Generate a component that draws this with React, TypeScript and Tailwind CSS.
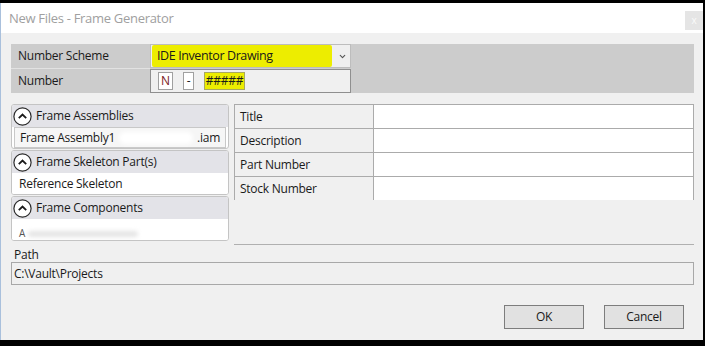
import { ChevronDown } from "lucide-react";

// Circled chevron used on the collapsible group headers
function CollapseIcon() {
  return (
    <svg width="19" height="19" viewBox="0 0 19 19" className="shrink-0">
      <circle cx="9.5" cy="9.5" r="8.6" fill="#fff" stroke="#2a2a2a" strokeWidth="1.2" />
      <path d="M5.8 11.2 L9.5 7.5 L13.2 11.2" fill="none" stroke="#1a1a1a" strokeWidth="1.8" />
    </svg>
  );
}

function Group({ title, children }: { title: string; children: React.ReactNode }) {
  return (
    <div className="flex flex-col border border-[#c4c4c4] rounded-[3px] overflow-hidden bg-white">
      <div className="h-[22px] bg-[#e3e3e8] flex items-center pl-px gap-[4px] text-[12px] tracking-[-0.25px] text-[#1a1a1a]">
        <CollapseIcon />
        <span>{title}</span>
      </div>
      {children}
    </div>
  );
}

const fields = ["Title", "Description", "Part Number", "Stock Number"];

export default function App() {
  return (
    <div className="w-[705px] h-[346px] bg-black pt-[3px] pb-[6px] pr-[2px] overflow-hidden font-['Open_Sans',sans-serif]">
      <div className="h-full flex flex-col bg-[#f0f0f0] border-l border-[#a9c0dc]">
        {/* Title bar */}
        <div className="h-[30px] bg-white flex items-start shrink-0">
          <span className="pl-[8px] mt-[6px] text-[13px] text-[#a0a0a0] tracking-[-0.3px]">
            New Files - Frame Generator
          </span>
          <div className="ml-auto mt-[8px] w-[18px] h-[19px] bg-[#e5e5e5] flex items-center justify-center text-[10px] text-[#fafafa]">
            x
          </div>
        </div>

        <div className="flex-1 flex flex-col pl-[10px] pr-[9px] pt-[11px] text-[12px] tracking-[-0.25px] text-[#1a1a1a]">
          {/* Number scheme block */}
          <div className="h-[49px] bg-[#cccccc] flex flex-col">
            <div className="h-[24px] flex">
              <div className="w-[139px] flex items-center pl-[7px]">Number Scheme</div>
              <div className="w-[201px] border border-[#bdbdbd] bg-[#efefef] flex items-center">
                <span className="ml-px h-[22px] w-[180px] bg-[#eded00] rounded-[2px] flex items-center pl-[5px] text-[12.5px] tracking-[-0.4px]">
                  IDE Inventor Drawing
                </span>
                <ChevronDown className="ml-auto mr-[3px] w-[9px] h-[9px] text-[#555]" strokeWidth={3} />
              </div>
            </div>
            <div className="h-px flex">
              <div className="w-[139px] bg-[#e2e2e2]" />
            </div>
            <div className="h-[24px] flex">
              <div className="w-[139px] flex items-center pl-[7px]">Number</div>
              <div className="w-[201px] border border-[#8f8f8f] bg-[#f0f0f0] flex items-center pl-[7px] gap-[10px]">
                <span className="w-[15px] h-[18px] border border-[#a0a0a0] bg-white flex items-center justify-center text-[#7a1c1c]">
                  N
                </span>
                <span className="w-[11px] h-[18px] border border-[#a0a0a0] bg-white flex items-center justify-center">
                  -
                </span>
                <span className="w-[41px] h-[18px] border border-[#a8a860] bg-[#eded00] flex items-center justify-center">
                  #####
                </span>
              </div>
            </div>
          </div>

          {/* Groups and property table */}
          <div className="mt-[11px] flex items-start gap-[5px]">
            <div className="w-[218px] flex flex-col gap-px">
              <Group title="Frame Assemblies">
                <div className="h-[21px] bg-[#f6f6f6] border border-[#c8c8c8] mx-[2px] flex items-center pl-[5px] pr-[5px]">
                  <span>Frame Assembly1</span>
                  <div className="flex-1 mx-[4px] h-[12px] bg-white rounded-full blur-[2px]" />
                  <span>.iam</span>
                </div>
              </Group>
              <Group title="Frame Skeleton Part(s)">
                <div className="h-[21px] bg-white flex items-center pl-[7px]">Reference Skeleton</div>
              </Group>
              <Group title="Frame Components">
                <div className="h-[21px] bg-white flex items-center pl-[7px] gap-[3px]">
                  <span className="text-[#555] text-[10px] leading-[12px] mt-[6px]">A</span>
                  <div className="w-[110px] h-[6px] mt-[8px] bg-[#e4e4e4] rounded-full blur-[2px]" />
                </div>
              </Group>
            </div>

            <div className="flex-1 flex flex-col">
              <div className="border-l border-r border-t border-[#ababab] flex flex-col">
                {fields.map((f, i) => (
                  <div
                    key={f}
                    className={
                      i < fields.length - 1
                        ? "h-[24px] flex border-b border-[#ababab]"
                        : "h-[23px] flex"
                    }
                  >
                    <div className="w-[139px] border-r border-[#ababab] bg-[#f0f0f0] flex items-center pl-[5px]">
                      {f}
                    </div>
                    <div className="flex-1 bg-white" />
                  </div>
                ))}
              </div>
              <div className="mt-[44px] h-px bg-[#b0b0b0]" />
            </div>
          </div>

          {/* Path */}
          <div className="h-[17px] flex items-end pl-[3px] leading-[15px]">Path</div>
          <div className="h-[23px] border border-[#a8a8a8] bg-[#f0f0f0] flex items-center pl-[2px]">
            C:\Vault\Projects
          </div>

          {/* Buttons */}
          <div className="mt-[20px] flex justify-end gap-[20px] mr-[10px]">
            <button className="w-[80px] h-[24px] border border-[#7d7d7d] bg-[#e1e1e1]">OK</button>
            <button className="w-[80px] h-[24px] border border-[#7d7d7d] bg-[#e1e1e1]">Cancel</button>
          </div>
        </div>
      </div>
    </div>
  );
}
